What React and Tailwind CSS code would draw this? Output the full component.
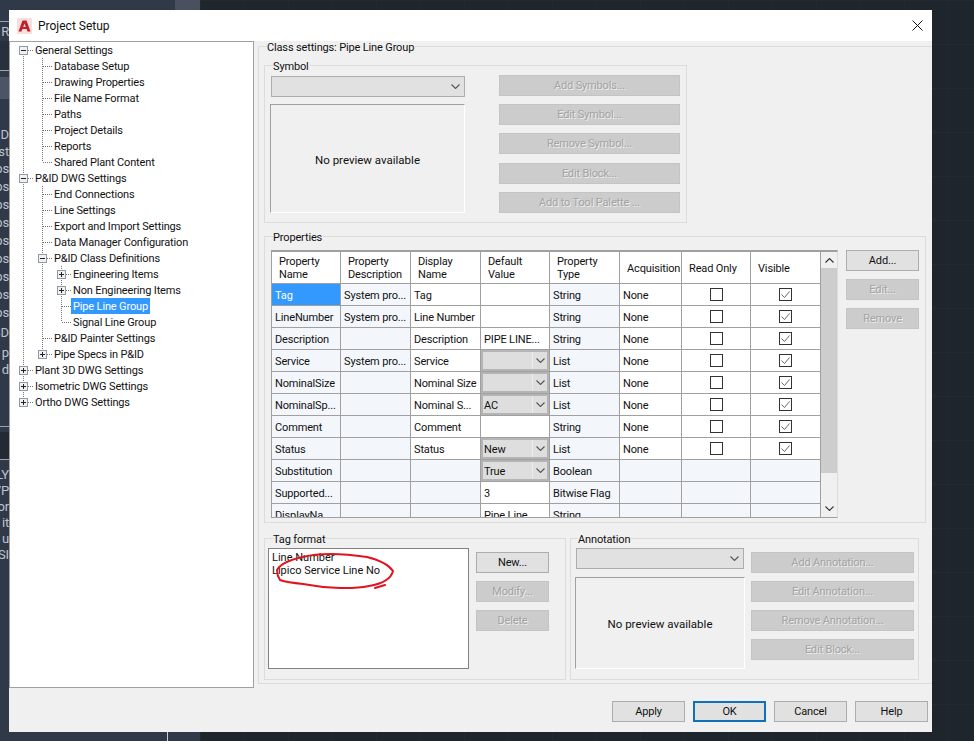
const TREE = [
    {
        label: 'General Settings',
        open: true,
        children: [
            { label: 'Database Setup' },
            { label: 'Drawing Properties' },
            { label: 'File Name Format' },
            { label: 'Paths' },
            { label: 'Project Details' },
            { label: 'Reports' },
            { label: 'Shared Plant Content' },
        ],
    },
    {
        label: 'P&ID DWG Settings',
        open: true,
        children: [
            { label: 'End Connections' },
            { label: 'Line Settings' },
            { label: 'Export and Import Settings' },
            { label: 'Data Manager Configuration' },
            {
                label: 'P&ID Class Definitions',
                open: true,
                children: [
                    { label: 'Engineering Items', closed: true },
                    { label: 'Non Engineering Items', closed: true },
                    { label: 'Pipe Line Group', selected: true },
                    { label: 'Signal Line Group' },
                ],
            },
            { label: 'P&ID Painter Settings' },
            { label: 'Pipe Specs in P&ID', closed: true },
        ],
    },
    { label: 'Plant 3D DWG Settings', closed: true },
    { label: 'Isometric DWG Settings', closed: true },
    { label: 'Ortho DWG Settings', closed: true },
];

const HEADERS = [
    ['Property', 'Name'],
    ['Property', 'Description'],
    ['Display', 'Name'],
    ['Default', 'Value'],
    ['Property', 'Type'],
    ['Acquisition'],
    ['Read Only'],
    ['Visible'],
];

const ROWS = [
    { name: 'Tag', desc: 'System pro...', display: 'Tag', value: '', type: 'String', checks: true, selected: true },
    { name: 'LineNumber', desc: 'System pro...', display: 'Line Number', value: '', type: 'String', checks: true },
    { name: 'Description', desc: '', display: 'Description', value: 'PIPE LINE...', type: 'String', checks: true },
    { name: 'Service', desc: 'System pro...', display: 'Service', combo: '', type: 'List', checks: true },
    { name: 'NominalSize', desc: '', display: 'Nominal Size', combo: '', type: 'List', checks: true },
    { name: 'NominalSp...', desc: '', display: 'Nominal S...', combo: 'AC', type: 'List', checks: true },
    { name: 'Comment', desc: '', display: 'Comment', value: '', type: 'String', checks: true },
    { name: 'Status', desc: '', display: 'Status', combo: 'New', type: 'List', checks: true },
    { name: 'Substitution', desc: '', display: '', combo: 'True', type: 'Boolean' },
    { name: 'Supported...', desc: '', display: '', value: '3', type: 'Bitwise Flag' },
    { name: 'DisplayNa...', desc: '', display: '', value: 'Pipe Line', type: 'String' },
];

function Chevron({ up = false, color = '#555' }) {
    return (
        <svg width="9" height="5" viewBox="0 0 9 5" fill="none" stroke={color} strokeWidth="1.1">
            <polyline points={up ? '0.5,4.5 4.5,0.5 8.5,4.5' : '0.5,0.5 4.5,4.5 8.5,0.5'} />
        </svg>
    );
}

function Btn({ children, disabled, primary, className = '' }) {
    const tone = disabled
        ? 'bg-[#cccccc] border-[#c4c4c4] text-[#a3a3a3] [text-shadow:1px_1px_0_#eeeeee]'
        : primary
            ? 'bg-[#e1e1e1] border-2 border-[#0f71b8] text-[#111]'
            : 'bg-[#e1e1e1] border-[#adadad] text-[#111]';
    return <div className={`h-[21px] w-full border pt-[2px] flex items-center justify-center whitespace-nowrap ${tone} ${className}`}>{children}</div>;
}

function Group({ label, className = '', labelLeft = 'left-[8px]', children }) {
    return (
        <div className={`relative border border-[#dcdcdc] ${className}`}>
            <span className={`absolute -top-[6px] ${labelLeft} bg-[#f0f0f0] pr-[1px] leading-[14px] text-[#111]`}>{label}</span>
            {children}
        </div>
    );
}

function Combo({ className = '' }) {
    return (
        <div className={`h-[21px] bg-[#e1e1e1] border border-[#adadad] flex items-center justify-end pr-[4px] ${className}`}>
            <Chevron />
        </div>
    );
}

function Preview({ className = '' }) {
    return (
        <div className={`flex items-center justify-center pt-[4px] text-[11.5px] tracking-normal border-t border-l border-t-[#a0a0a0] border-l-[#a0a0a0] border-r border-b border-r-white border-b-white text-[#111] ${className}`}>
            No preview available
        </div>
    );
}

function TreeGuide({ through, half, lastInList, horizontal, box }) {
    return (
        <svg width="19" height="16" viewBox="0 0 19 16" className="shrink-0">
            {through && <line x1="9.5" y1="0" x2="9.5" y2="16" stroke="#777" strokeDasharray="1 1" />}
            {half && <line x1="9.5" y1={lastInList ? 0 : 8} x2="9.5" y2={lastInList ? 8 : 16} stroke="#777" strokeDasharray="1 1" />}
            {horizontal && <line x1="10" y1="8.5" x2="19" y2="8.5" stroke="#777" strokeDasharray="1 1" />}
            {box && (
                <g>
                    <rect x="5.5" y="4.5" width="8" height="8" fill="#f1f1f1" stroke="#8e9aa6" />
                    <line x1="7" y1="8.5" x2="12" y2="8.5" stroke="#222" />
                    {box === 'plus' && <line x1="9.5" y1="6" x2="9.5" y2="11" stroke="#222" />}
                </g>
            )}
        </svg>
    );
}

// walks the tree, passing down which ancestor levels still carry a dotted line
function TreeRows({ nodes, guides = [], root = false }) {
    return nodes.map((node, i) => {
        const last = i === nodes.length - 1;
        const first = root && i === 0;
        const box = node.open ? 'minus' : node.closed ? 'plus' : null;
        return (
            <div key={node.label}>
                <div className="flex h-[16px] items-center">
                    {guides.map((on, g) => <TreeGuide key={g} through={on} />)}
                    <TreeGuide
                        through={!last && !first}
                        half={last || first}
                        lastInList={last}
                        horizontal
                        box={box}
                    />
                    <span className={`px-[2px] h-[16px] leading-[18px] whitespace-nowrap ${node.selected ? 'bg-[#3399ff] text-white' : 'text-[#111]'}`}>
                        {node.label}
                    </span>
                </div>
                {node.children && <TreeRows nodes={node.children} guides={[...guides, !last]} />}
            </div>
        );
    });
}

function CheckBox({ checked }) {
    return (
        <div className="w-[13px] h-[13px] border border-[#333] bg-white flex items-center justify-center">
            {checked && (
                <svg width="9" height="8" viewBox="0 0 9 8" fill="none" stroke="#666" strokeWidth="1">
                    <polyline points="0.5,3.5 3.5,6.5 8.5,0.5" />
                </svg>
            )}
        </div>
    );
}

const cellBase = 'h-[22px] border-r border-b border-[#a0a0a0] flex items-center pl-[3px] whitespace-nowrap overflow-hidden text-[#111]';

function PropertyRow({ row }) {
    const light = 'bg-[#f3f7fc]';
    return (
        <>
            <div className={`${cellBase} pt-[3px] ${row.selected ? 'bg-[#3399ff] !text-white' : light}`}>{row.name}</div>
            <div className={`${cellBase} pt-[3px] ${light}`}>{row.desc}</div>
            <div className={`${cellBase} pt-[3px] ${row.display ? 'bg-white' : light}`}>{row.display}</div>
            {row.combo !== undefined ? (
                <div className="h-[22px] border-r border-b border-[#a0a0a0] bg-white">
                    <div className="h-full flex border-2 border-[#b4b4b4] bg-[#dedede] text-[#111]">
                        <div className="flex-1 flex items-center pl-[1px] pt-[3px]">{row.combo}</div>
                        <div className="w-[15px] border-l border-[#ececec] flex items-center justify-center"><Chevron /></div>
                    </div>
                </div>
            ) : (
                <div className={`${cellBase} pt-[3px] bg-white`}>{row.value}</div>
            )}
            <div className={`${cellBase} pt-[3px] ${light}`}>{row.type}</div>
            <div className={`${cellBase} pt-[3px] ${row.checks ? 'bg-white' : light}`}>{row.checks ? 'None' : ''}</div>
            <div className={`${cellBase} !pl-0 justify-center ${row.checks ? 'bg-white' : light}`}>{row.checks && <CheckBox />}</div>
            <div className={`${cellBase} !pl-0 justify-center ${row.checks ? 'bg-white' : light}`}>{row.checks && <CheckBox checked />}</div>
        </>
    );
}

function PropertyGrid() {
    return (
        <div className="w-[567px] h-[268px] flex border-l border-t-2 border-b border-r border-l-[#a0a0a0] border-t-[#a0a0a0] border-b-[#a0a0a0] border-r-[#dcdcdc]">
            <div className="w-[549px] h-full overflow-hidden bg-white">
                <div className="grid grid-cols-[69px_70px_70px_69px_70px_62px_69px_70px]">
                    {HEADERS.map((lines) => (
                        <div key={lines.join()} className="h-[32px] border-r border-b border-[#a0a0a0] flex flex-col justify-center pl-[7px] pt-[1px] leading-[13px] text-[#111] whitespace-nowrap">
                            {lines.map((l) => <span key={l}>{l}</span>)}
                        </div>
                    ))}
                    {ROWS.map((row) => <PropertyRow key={row.name} row={row} />)}
                </div>
            </div>
            <div className="flex-1 flex flex-col bg-[#f0f0f0]">
                <div className="h-[16px] flex items-center justify-center"><Chevron up color="#333" /></div>
                <div className="h-[205px] bg-[#cdcdcd]" />
                <div className="flex-1 flex items-end justify-center pb-[6px]"><Chevron color="#333" /></div>
            </div>
        </div>
    );
}

function StripText({ children, className = '' }) {
    return <div className={`flex items-center justify-end whitespace-nowrap overflow-hidden text-[#bcc3cf] text-[13px] ${className}`}>{children}</div>;
}

// the panel of the drawing program behind the dialog, only its right edge shows
function BackPanel() {
    return (
        <div className="relative w-[200px] h-full bg-[#303947] shrink-0 overflow-hidden">
            <div className="w-[9px] flex flex-col">
                <div className="h-[22px] border-b border-[#9aa3b0]" />
                <StripText className="h-[19px]">R</StripText>
                <div className="h-[30px] bg-[#28303b] border-b border-[#9aa3b0]" />
                <div className="h-[6px]" />
                <div className="h-[22px] bg-[#4a5566]" />
                <div className="h-[27px]" />
                <StripText className="h-[17px]">D</StripText>
                <StripText className="h-[17px]">st</StripText>
                {[0, 1, 2, 3, 4, 5, 6, 7, 8].map((n) => (
                    <StripText key={n} className="h-[18px]">ps</StripText>
                ))}
                <div className="h-[1px]" />
                <StripText className="h-[20px]">3D</StripText>
                <StripText className="h-[19px]">p</StripText>
                <StripText className="h-[16px]">d</StripText>
                <div className="h-[49px] border-b border-[#9aa3b0]" />
                <div className="h-[5px]" />
                <div className="h-[28px] bg-[#232a33] border-b border-[#9aa3b0]" />
                <div className="h-[6px]" />
                <StripText className="h-[17px]">LY</StripText>
                <StripText className="h-[16px]">VP</StripText>
                <StripText className="h-[16px]">or</StripText>
                <StripText className="h-[16px]">it</StripText>
                <StripText className="h-[16px]">u</StripText>
                <StripText className="h-[16px]">SI</StripText>
            </div>
            <div className="absolute left-[167px] bottom-0 w-px h-[9px] bg-[#c9ced6]" />
            <div className="absolute left-[175px] top-0 w-[25px] h-[10px] bg-[#49515f]" />
        </div>
    );
}

export default function App() {
    return (
        <div className="relative w-[974px] h-[741px] overflow-hidden flex bg-[#1f252d] font-['Roboto',Arial,sans-serif] text-[11px] tracking-[-0.15px]">
            <BackPanel />
            <div className="flex-1 bg-[linear-gradient(#232a32_1px,transparent_1px),linear-gradient(90deg,#22282f_1px,transparent_1px)] bg-[size:44px_44px]" />

            {/* Project Setup dialog */}
            <div className="absolute left-[9px] top-[10px] w-[923px] h-[722px] bg-[#f0f0f0] flex flex-col">
                <div className="h-[31px] bg-white flex items-center pl-[8px] pr-[9px] shrink-0">
                    <svg width="15" height="16" viewBox="0 0 15 16" className="shrink-0">
                        <rect width="15" height="16" rx="1" fill="#f7dfdc" />
                        <polygon points="5.5,2.5 9.5,2.5 13.5,13.5 10.5,13.5 9.6,11 5.4,11 4.5,13.5 1.5,13.5" fill="#c01f2b" />
                        <polygon points="7.5,5.5 6.2,9 8.8,9" fill="#f7dfdc" />
                    </svg>
                    <span className="ml-[6px] text-[12px] tracking-normal text-[#111]">Project Setup</span>
                    <svg width="11" height="11" viewBox="0 0 11 11" className="ml-auto" stroke="#111" strokeWidth="1">
                        <line x1="0.5" y1="0.5" x2="10.5" y2="10.5" />
                        <line x1="10.5" y1="0.5" x2="0.5" y2="10.5" />
                    </svg>
                </div>

                <div className="flex">
                    <div className="w-[245px] h-[647px] bg-white border border-[#a0a0a0] pl-[4px] shrink-0">
                        <TreeRows nodes={TREE} root />
                    </div>

                    <Group
                        label="Class settings: Pipe Line Group"
                        labelLeft="left-[8px]"
                        className="ml-[4px] mt-[5px] w-[674px] h-[638px] border-r-0 pl-[5px] pt-[18px]"
                    >
                        <Group label="Symbol" className="w-[423px] h-[158px] flex pl-[5px] pt-[10px]">
                            <div className="w-[195px]">
                                <Combo className="ml-[1px] w-[194px]" />
                                <Preview className="mt-[7px] w-[195px] h-[109px]" />
                            </div>
                            <div className="ml-[34px] w-[181px] -mt-[1px] flex flex-col gap-[8px]">
                                <Btn disabled>Add Symbols...</Btn>
                                <Btn disabled>Edit Symbol...</Btn>
                                <Btn disabled className="mb-[1px]">Remove Symbol...</Btn>
                                <Btn disabled>Edit Block...</Btn>
                                <Btn disabled>Add to Tool Palette ...</Btn>
                            </div>
                        </Group>

                        <Group label="Properties" className="mt-[13px] w-[662px] h-[287px] flex pl-[6px] pt-[13px]">
                            <PropertyGrid />
                            <div className="ml-[8px] w-[73px] flex flex-col gap-[8px]">
                                <Btn>Add...</Btn>
                                <Btn disabled>Edit...</Btn>
                                <Btn disabled>Remove</Btn>
                            </div>
                        </Group>

                        <div className="mt-[15px] flex gap-[4px]">
                            <Group label="Tag format" className="w-[302px] h-[142px] flex pl-[3px] pt-[9px]">
                                <div className="relative w-[201px] h-[121px] bg-white border border-[#828282] pl-[3px] pt-[2px] leading-[13px] tracking-normal text-[#111]">
                                    <div>Line Number</div>
                                    <div>Lipico Service Line No</div>
                                    <svg width="199" height="119" viewBox="0 0 199 119" fill="none" className="absolute left-0 top-0" stroke="#e0141e" strokeWidth="2" strokeLinecap="round">
                                        <path d="M8 21 C12 14 24 10 34 8 C50 4 70 4 98 8 C110 11 120 16 124 22 C122 30 112 35 100 37 C85 40 60 40 34 35 C24 34 14 32 11 31 C9 28 8 25 8 21 M106 39 L116 36" />
                                    </svg>
                                </div>
                                <div className="ml-[7px] w-[73px] mt-[4px] flex flex-col gap-[8px]">
                                    <Btn>New...</Btn>
                                    <Btn disabled>Modify...</Btn>
                                    <Btn disabled>Delete</Btn>
                                </div>
                            </Group>

                            <Group label="Annotation" labelLeft="left-[7px]" className="w-[349px] h-[142px] flex pl-[4px] pt-[9px]">
                                <div className="w-[170px]">
                                    <Combo className="ml-[1px] w-[168px]" />
                                    <Preview className="mt-[8px] w-[170px] h-[92px]" />
                                </div>
                                <div className="ml-[6px] w-[163px] mt-[4px] flex flex-col gap-[8px]">
                                    <Btn disabled>Add Annotation...</Btn>
                                    <Btn disabled>Edit Annotation...</Btn>
                                    <Btn disabled>Remove Annotation...</Btn>
                                    <Btn disabled>Edit Block...</Btn>
                                </div>
                            </Group>
                        </div>
                    </Group>
                </div>

                <div className="mt-auto pb-[10px] pr-[4px] flex justify-end gap-[8px]">
                    <div className="w-[73px]"><Btn>Apply</Btn></div>
                    <div className="w-[73px]"><Btn primary>OK</Btn></div>
                    <div className="w-[73px]"><Btn>Cancel</Btn></div>
                    <div className="w-[73px]"><Btn>Help</Btn></div>
                </div>
            </div>
        </div>
    );
}
